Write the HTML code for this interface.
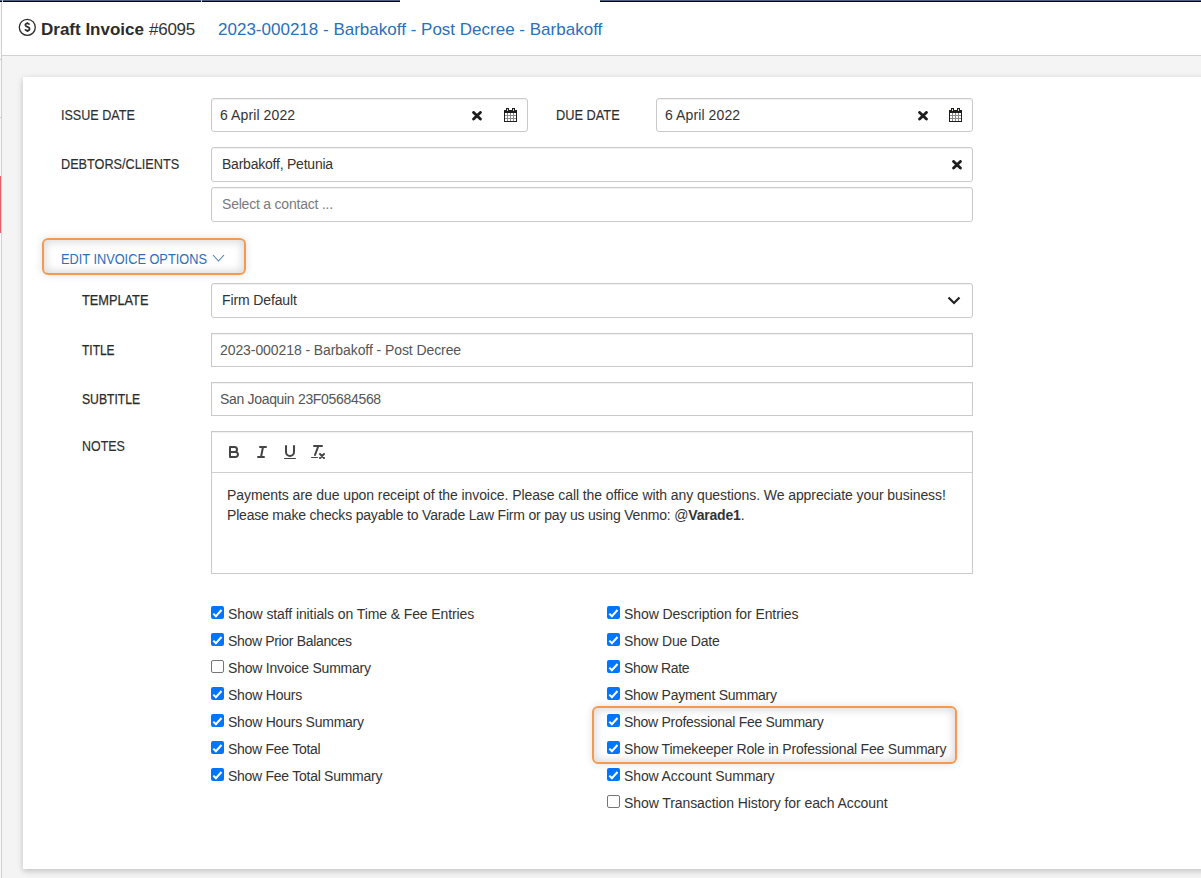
<!DOCTYPE html>
<html><head><meta charset="utf-8">
<style>
*{box-sizing:border-box}
html,body{margin:0;padding:0}
body{width:1201px;height:878px;overflow:hidden;position:relative;background:#f4f4f4;font-family:"Liberation Sans",sans-serif;color:#333}
.abs{position:absolute}
#topbar{left:0;top:0;width:1201px;height:1px;background:#4a6282}
#topbar2{left:0;top:1px;width:1201px;height:1px;background:#060606}
#notch{left:201px;top:0;width:1px;height:2px;background:#c9d2dc}
#leftcol{left:0;top:2px;width:1px;height:876px;background:#fafafa}
#leftline{left:1px;top:2px;width:1px;height:876px;background:#cfcfcf}
#red{left:0;top:176px;width:1px;height:57px;background:#de656b}
#header{left:2px;top:2px;width:1199px;height:54px;background:#fff;border-bottom:1px solid #d2d2d2}
#card{left:23px;top:77px;width:1200px;height:792px;background:#fff;box-shadow:0 2px 6px rgba(0,0,0,.22)}
.t{position:absolute;white-space:pre;line-height:1}
.lbl{font-size:14px;color:#333;letter-spacing:-0.7px}
.inp{position:absolute;border:1px solid #cacaca;border-radius:3px;background:#fff;box-shadow:inset 0 1px 1px rgba(0,0,0,.06)}
.sq{border-radius:0}
.val{font-size:14px;color:#333}
.grey{color:#555}
.ph{color:#8a8a8a}
.cb{position:absolute;width:13px;height:13px;border-radius:2px}
.cb.on{background:#0075ff}
.cb.off{background:#fff;border:1px solid #767676}
.cbt{font-size:14px;color:#333}
.hl{position:absolute;border:2.5px solid #f39a52;border-radius:6px;box-shadow:inset 0 0 8px 2px rgba(0,0,0,.15),0 0 8px rgba(0,0,0,.12)}
</style></head>
<body>
<div class="abs" id="header"></div>
<div class="abs" id="leftcol"></div>
<div class="abs" id="leftline"></div>
<div class="abs" id="red"></div>
<div class="abs" style="left:0;top:59px;width:1px;height:1px;background:#cdcdcd"></div>
<div class="abs" style="left:0;top:117px;width:1px;height:1px;background:#cdcdcd"></div>
<div class="abs" id="topbar"></div>
<div class="abs" id="topbar2"></div>
<div class="abs" id="notch"></div>
<div class="abs" style="left:2px;top:0;width:1px;height:2px;background:#c9d2dc"></div>
<div class="abs" style="left:400px;top:0;width:200px;height:2px;background:#fff"></div>

<!-- header -->
<svg class="abs" style="left:18px;top:18px" width="19" height="19" viewBox="0 0 19 19">
<circle cx="9.3" cy="9.3" r="8" fill="none" stroke="#2b2b2b" stroke-width="1.3"/>
<path d="M9.4 4.3V5.6M9.4 12.6V14M11.5 6.6C11.2 5.9 10.5 5.5 9.4 5.5C8.1 5.5 7.3 6.1 7.3 7.1C7.3 9.3 11.6 8.5 11.6 10.7C11.6 11.8 10.7 12.5 9.4 12.5C8.2 12.5 7.4 12 7.1 11.2" fill="none" stroke="#2b2b2b" stroke-width="1.7"/>
</svg>

<div class="abs" id="card"></div>
<div class="inp" style="left:211px;top:98px;width:317px;height:34px"></div>
<svg class="abs" style="left:472px;top:111px" width="10" height="10" viewBox="0 0 10 10"><path d="M1.6 1.5 L8.4 8 M8.4 1.5 L1.6 8" stroke="#1e1e1e" stroke-width="2.9" stroke-linecap="round"/></svg>
<svg class="abs" style="left:504px;top:108px" width="13" height="14" viewBox="0 0 13 14" shape-rendering="crispEdges"><rect x="0" y="2" width="13" height="12" fill="#1e1e1e"/><rect x="2" y="0" width="3" height="4" fill="#1e1e1e"/><rect x="8" y="0" width="3" height="4" fill="#1e1e1e"/><rect x="3" y="1" width="1" height="2" fill="#cfd8c8"/><rect x="9" y="1" width="1" height="2" fill="#cfd8c8"/><rect x="1" y="5" width="11" height="8" fill="#8a8a8a"/><rect x="1" y="5" width="2" height="2" fill="#fff"/><rect x="1" y="8" width="2" height="2" fill="#fff"/><rect x="1" y="11" width="2" height="2" fill="#fff"/><rect x="4" y="5" width="2" height="2" fill="#fff"/><rect x="4" y="8" width="2" height="2" fill="#fff"/><rect x="4" y="11" width="2" height="2" fill="#fff"/><rect x="7" y="5" width="2" height="2" fill="#fff"/><rect x="7" y="8" width="2" height="2" fill="#fff"/><rect x="7" y="11" width="2" height="2" fill="#fff"/><rect x="10" y="5" width="2" height="2" fill="#fff"/><rect x="10" y="8" width="2" height="2" fill="#fff"/><rect x="10" y="11" width="2" height="2" fill="#fff"/></svg>
<div class="inp" style="left:656px;top:98px;width:317px;height:34px"></div>
<svg class="abs" style="left:918px;top:111px" width="10" height="10" viewBox="0 0 10 10"><path d="M1.6 1.5 L8.4 8 M8.4 1.5 L1.6 8" stroke="#1e1e1e" stroke-width="2.9" stroke-linecap="round"/></svg>
<svg class="abs" style="left:949px;top:108px" width="13" height="14" viewBox="0 0 13 14" shape-rendering="crispEdges"><rect x="0" y="2" width="13" height="12" fill="#1e1e1e"/><rect x="2" y="0" width="3" height="4" fill="#1e1e1e"/><rect x="8" y="0" width="3" height="4" fill="#1e1e1e"/><rect x="3" y="1" width="1" height="2" fill="#cfd8c8"/><rect x="9" y="1" width="1" height="2" fill="#cfd8c8"/><rect x="1" y="5" width="11" height="8" fill="#8a8a8a"/><rect x="1" y="5" width="2" height="2" fill="#fff"/><rect x="1" y="8" width="2" height="2" fill="#fff"/><rect x="1" y="11" width="2" height="2" fill="#fff"/><rect x="4" y="5" width="2" height="2" fill="#fff"/><rect x="4" y="8" width="2" height="2" fill="#fff"/><rect x="4" y="11" width="2" height="2" fill="#fff"/><rect x="7" y="5" width="2" height="2" fill="#fff"/><rect x="7" y="8" width="2" height="2" fill="#fff"/><rect x="7" y="11" width="2" height="2" fill="#fff"/><rect x="10" y="5" width="2" height="2" fill="#fff"/><rect x="10" y="8" width="2" height="2" fill="#fff"/><rect x="10" y="11" width="2" height="2" fill="#fff"/></svg>
<div class="inp" style="left:211px;top:147px;width:762px;height:35px"></div>
<svg class="abs" style="left:952px;top:160px" width="10" height="10" viewBox="0 0 10 10"><path d="M1.6 1.5 L8.4 8 M8.4 1.5 L1.6 8" stroke="#1e1e1e" stroke-width="2.9" stroke-linecap="round"/></svg>
<div class="inp" style="left:211px;top:187px;width:762px;height:35px"></div>
<div class="hl" style="left:42px;top:238px;width:204px;height:37px"></div>
<svg class="abs" style="left:212px;top:254px" width="13" height="9" viewBox="0 0 13 9"><path d="M1 1 L6.5 7 L12 1" fill="none" stroke="#4a7fb8" stroke-width="1.1"/></svg>
<div class="inp" style="left:211px;top:283px;width:762px;height:35px"></div>
<svg class="abs" style="left:947px;top:296px" width="14" height="9" viewBox="0 0 14 9"><path d="M1.5 1.5 L7 7 L12.5 1.5" fill="none" stroke="#222" stroke-width="2.2"/></svg>
<div class="inp sq" style="left:211px;top:333px;width:762px;height:34px"></div>
<div class="inp sq" style="left:211px;top:382px;width:762px;height:34px"></div>
<div class="inp sq" style="left:211px;top:431px;width:762px;height:143px"></div>
<div class="abs" style="left:212px;top:472px;width:760px;height:1px;background:#cfcfcf"></div>
<svg class="abs" style="left:225px;top:443px" width="18" height="18" viewBox="0 0 18 18"><path fill="none" stroke="#444" stroke-width="2" stroke-linecap="round" stroke-linejoin="round" d="M5,4H9.5A2.5,2.5,0,0,1,12,6.5v0A2.5,2.5,0,0,1,9.5,9H5A0,0,0,0,1,5,9V4A0,0,0,0,1,5,4Z"/><path fill="none" stroke="#444" stroke-width="2" stroke-linecap="round" stroke-linejoin="round" d="M5,9h5.5A2.5,2.5,0,0,1,13,11.5v0A2.5,2.5,0,0,1,10.5,14H5a0,0,0,0,1,0,0V9A0,0,0,0,1,5,9Z"/></svg>
<svg class="abs" style="left:253px;top:443px" width="18" height="18" viewBox="0 0 18 18"><path fill="none" stroke="#444" stroke-width="2" stroke-linecap="round" stroke-linejoin="round" d="M7 4H13M5 14H11M8 14L10 4"/></svg>
<svg class="abs" style="left:281px;top:443px" width="18" height="18" viewBox="0 0 18 18"><path fill="none" stroke="#444" stroke-width="2" stroke-linecap="round" stroke-linejoin="round" d="M5,3V9a4.012,4.012,0,0,0,4,4H9a4.012,4.012,0,0,0,4-4V3"/><rect fill="#444" height="1" rx="0.5" ry="0.5" width="12" x="3" y="15"/></svg>
<svg class="abs" style="left:309px;top:443px" width="18" height="18" viewBox="0 0 18 18"><path fill="none" stroke="#444" stroke-width="2" stroke-linecap="round" stroke-linejoin="round" d="M5 3H13M6 12L9.35 3M11 11L15 15M15 11L11 15"/><rect fill="#444" height="1" rx="0.5" ry="0.5" width="7" x="2" y="14"/></svg>
<div class="cb on" style="left:211px;top:606px"><svg width="13" height="13" viewBox="0 0 13 13"><path d="M2.3 6.6 L4.9 9.2 L10.5 3" fill="none" stroke="#fff" stroke-width="2"/></svg></div>
<div class="cb on" style="left:211px;top:633px"><svg width="13" height="13" viewBox="0 0 13 13"><path d="M2.3 6.6 L4.9 9.2 L10.5 3" fill="none" stroke="#fff" stroke-width="2"/></svg></div>
<div class="cb off" style="left:211px;top:660px"></div>
<div class="cb on" style="left:211px;top:687px"><svg width="13" height="13" viewBox="0 0 13 13"><path d="M2.3 6.6 L4.9 9.2 L10.5 3" fill="none" stroke="#fff" stroke-width="2"/></svg></div>
<div class="cb on" style="left:211px;top:714px"><svg width="13" height="13" viewBox="0 0 13 13"><path d="M2.3 6.6 L4.9 9.2 L10.5 3" fill="none" stroke="#fff" stroke-width="2"/></svg></div>
<div class="cb on" style="left:211px;top:741px"><svg width="13" height="13" viewBox="0 0 13 13"><path d="M2.3 6.6 L4.9 9.2 L10.5 3" fill="none" stroke="#fff" stroke-width="2"/></svg></div>
<div class="cb on" style="left:211px;top:768px"><svg width="13" height="13" viewBox="0 0 13 13"><path d="M2.3 6.6 L4.9 9.2 L10.5 3" fill="none" stroke="#fff" stroke-width="2"/></svg></div>
<div class="cb on" style="left:607px;top:606px"><svg width="13" height="13" viewBox="0 0 13 13"><path d="M2.3 6.6 L4.9 9.2 L10.5 3" fill="none" stroke="#fff" stroke-width="2"/></svg></div>
<div class="cb on" style="left:607px;top:633px"><svg width="13" height="13" viewBox="0 0 13 13"><path d="M2.3 6.6 L4.9 9.2 L10.5 3" fill="none" stroke="#fff" stroke-width="2"/></svg></div>
<div class="cb on" style="left:607px;top:660px"><svg width="13" height="13" viewBox="0 0 13 13"><path d="M2.3 6.6 L4.9 9.2 L10.5 3" fill="none" stroke="#fff" stroke-width="2"/></svg></div>
<div class="cb on" style="left:607px;top:687px"><svg width="13" height="13" viewBox="0 0 13 13"><path d="M2.3 6.6 L4.9 9.2 L10.5 3" fill="none" stroke="#fff" stroke-width="2"/></svg></div>
<div class="cb on" style="left:607px;top:714px"><svg width="13" height="13" viewBox="0 0 13 13"><path d="M2.3 6.6 L4.9 9.2 L10.5 3" fill="none" stroke="#fff" stroke-width="2"/></svg></div>
<div class="cb on" style="left:607px;top:741px"><svg width="13" height="13" viewBox="0 0 13 13"><path d="M2.3 6.6 L4.9 9.2 L10.5 3" fill="none" stroke="#fff" stroke-width="2"/></svg></div>
<div class="cb on" style="left:607px;top:768px"><svg width="13" height="13" viewBox="0 0 13 13"><path d="M2.3 6.6 L4.9 9.2 L10.5 3" fill="none" stroke="#fff" stroke-width="2"/></svg></div>
<div class="cb off" style="left:607px;top:795px"></div>
<div class="hl" style="left:592px;top:706px;width:365px;height:58px"></div>
<div class="t" id="h1" style="left:41px;top:21px;font-size:17px;letter-spacing:-0.000px;color:#2b2b2b;"><b>Draft Invoice</b></div>
<div class="t" id="h2" style="left:149px;top:21px;font-size:17px;letter-spacing:-0.250px;color:#333;">#6095</div>
<div class="t" id="h3" style="left:218px;top:21px;font-size:17px;letter-spacing:0.006px;color:#2b70b8;">2023-000218 - Barbakoff - Post Decree - Barbakoff</div>
<div class="t" id="l1" style="left:61px;top:108px;font-size:14.5px;letter-spacing:0.000px;transform:scaleX(0.8667);transform-origin:0 0;color:#2e2e2e;-webkit-text-stroke:0.15px #2e2e2e;">ISSUE DATE</div>
<div class="t" id="v1" style="left:220px;top:108px;font-size:14px;letter-spacing:0.101px;color:#333;">6 April 2022</div>
<div class="t" id="l2" style="left:556px;top:108px;font-size:14.5px;letter-spacing:0.000px;transform:scaleX(0.8817);transform-origin:0 0;color:#2e2e2e;-webkit-text-stroke:0.15px #2e2e2e;">DUE DATE</div>
<div class="t" id="v2" style="left:665px;top:108px;font-size:14px;letter-spacing:0.101px;color:#333;">6 April 2022</div>
<div class="t" id="l3" style="left:61px;top:157px;font-size:14.5px;letter-spacing:0.000px;transform:scaleX(0.8747);transform-origin:0 0;color:#2e2e2e;-webkit-text-stroke:0.15px #2e2e2e;">DEBTORS/CLIENTS</div>
<div class="t" id="v3" style="left:222px;top:157px;font-size:14px;letter-spacing:-0.225px;color:#333;">Barbakoff, Petunia</div>
<div class="t" id="v4" style="left:222px;top:197px;font-size:14px;letter-spacing:-0.211px;color:#7a7a7a;">Select a contact ...</div>
<div class="t" id="eio" style="left:61px;top:252px;font-size:14px;letter-spacing:0.000px;transform:scaleX(0.9119);transform-origin:0 0;color:#2b70b8;">EDIT INVOICE OPTIONS</div>
<div class="t" id="l4" style="left:82px;top:293px;font-size:14.5px;letter-spacing:0.000px;transform:scaleX(0.8800);transform-origin:0 0;color:#2a2a2a;-webkit-text-stroke:0.25px #2a2a2a;">TEMPLATE</div>
<div class="t" id="v5" style="left:222px;top:293px;font-size:14px;letter-spacing:-0.128px;color:#333;">Firm Default</div>
<div class="t" id="l5" style="left:82px;top:343px;font-size:14.5px;letter-spacing:0.000px;transform:scaleX(0.8258);transform-origin:0 0;color:#2a2a2a;-webkit-text-stroke:0.25px #2a2a2a;">TITLE</div>
<div class="t" id="v6" style="left:220px;top:343px;font-size:14px;letter-spacing:-0.083px;color:#555;">2023-000218 - Barbakoff - Post Decree</div>
<div class="t" id="l6" style="left:82px;top:392px;font-size:14.5px;letter-spacing:0.000px;transform:scaleX(0.8384);transform-origin:0 0;color:#2a2a2a;-webkit-text-stroke:0.25px #2a2a2a;">SUBTITLE</div>
<div class="t" id="v7" style="left:220px;top:392px;font-size:14px;letter-spacing:-0.318px;color:#555;">San Joaquin 23F05684568</div>
<div class="t" id="l7" style="left:82px;top:439px;font-size:14.5px;letter-spacing:0.000px;transform:scaleX(0.8571);transform-origin:0 0;color:#2e2e2e;-webkit-text-stroke:0.15px #2e2e2e;">NOTES</div>
<div class="t" id="n1" style="left:227px;top:488px;font-size:14px;letter-spacing:-0.078px;color:#333;">Payments are due upon receipt of the invoice. Please call the office with any questions. We appreciate your business!</div>
<div class="t" id="n2" style="left:227px;top:508px;font-size:14px;letter-spacing:-0.191px;color:#333;">Please make checks payable to Varade Law Firm or pay us using Venmo: @<b>Varade1</b>.</div>
<div class="t" id="c00" style="left:228px;top:607px;font-size:14px;letter-spacing:-0.100px;color:#333;">Show staff initials on Time &amp; Fee Entries</div>
<div class="t" id="c01" style="left:228px;top:634px;font-size:14px;letter-spacing:-0.333px;color:#333;">Show Prior Balances</div>
<div class="t" id="c02" style="left:228px;top:661px;font-size:14px;letter-spacing:-0.210px;color:#333;">Show Invoice Summary</div>
<div class="t" id="c03" style="left:228px;top:688px;font-size:14px;letter-spacing:-0.223px;color:#333;">Show Hours</div>
<div class="t" id="c04" style="left:228px;top:715px;font-size:14px;letter-spacing:-0.235px;color:#333;">Show Hours Summary</div>
<div class="t" id="c05" style="left:228px;top:742px;font-size:14px;letter-spacing:-0.278px;color:#333;">Show Fee Total</div>
<div class="t" id="c06" style="left:228px;top:769px;font-size:14px;letter-spacing:-0.268px;color:#333;">Show Fee Total Summary</div>
<div class="t" id="c10" style="left:624px;top:607px;font-size:14px;letter-spacing:-0.079px;color:#333;">Show Description for Entries</div>
<div class="t" id="c11" style="left:624px;top:634px;font-size:14px;letter-spacing:-0.184px;color:#333;">Show Due Date</div>
<div class="t" id="c12" style="left:624px;top:661px;font-size:14px;letter-spacing:-0.374px;color:#333;">Show Rate</div>
<div class="t" id="c13" style="left:624px;top:688px;font-size:14px;letter-spacing:-0.263px;color:#333;">Show Payment Summary</div>
<div class="t" id="c14" style="left:624px;top:715px;font-size:14px;letter-spacing:-0.286px;color:#333;">Show Professional Fee Summary</div>
<div class="t" id="c15" style="left:624px;top:742px;font-size:14px;letter-spacing:-0.210px;color:#333;">Show Timekeeper Role in Professional Fee Summary</div>
<div class="t" id="c16" style="left:624px;top:769px;font-size:14px;letter-spacing:-0.105px;color:#333;">Show Account Summary</div>
<div class="t" id="c17" style="left:624px;top:796px;font-size:14px;letter-spacing:-0.083px;color:#333;">Show Transaction History for each Account</div>
</body></html>
